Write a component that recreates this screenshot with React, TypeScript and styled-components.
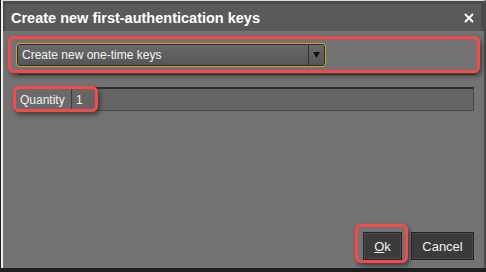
import React from 'react';
import styled, { createGlobalStyle } from 'styled-components';

const GlobalStyle = createGlobalStyle`
  html, body {
    margin: 0;
    padding: 0;
    background: #1f1f1f;
  }
  body {
    font-family: "Liberation Sans", Arial, sans-serif;
  }
`;

const Page = styled.div`
  width: 486px;
  height: 272px;
  box-sizing: border-box;
  padding: 0 0 4px 1px;
  display: flex;
  background: #1f1f1f;
`;

const Window = styled.div`
  flex: 1;
  display: flex;
  flex-direction: column;
  border-left: 2px solid #efefef;
  border-top: 1px solid #d8d8d8;
  border-right: 2px solid #4a4a4a;
  background: #737373;
`;

const Header = styled.div`
  background: #4b4b4b;
  padding: 3px 3px 0 2px;
`;

const TitleBar = styled.div`
  height: 27px;
  display: flex;
  align-items: center;
  justify-content: space-between;
  padding: 0 6px 0 6px;
  background: #5a5a5a;
  color: #fff;
  font-weight: bold;
  font-size: 14.5px;
`;

const CloseButton = styled.span`
  display: flex;
  width: 10px;
  height: 10px;
  margin-right: 1px;
`;

const Body = styled.div`
  flex: 1;
  display: flex;
  flex-direction: column;
  padding: 12px 10px 8px 12px;
`;

const Marked = styled.div`
  position: relative;
  display: flex;
`;

const Annotation = styled.div<{ $top: number; $left: number; $right: number; $bottom: number }>`
  position: absolute;
  top: ${(p) => p.$top}px;
  left: ${(p) => p.$left}px;
  right: ${(p) => p.$right}px;
  bottom: ${(p) => p.$bottom}px;
  border: 3px solid #f44a4a;
  border-radius: 6px;
  box-shadow: 2px 3px 5px rgba(0, 0, 0, 0.45);
  pointer-events: none;
`;

const SelectBox = styled.div`
  width: 310px;
  height: 24px;
  box-sizing: border-box;
  margin-left: 1px;
  display: flex;
  align-items: stretch;
  border: 1px solid #d3a22c;
  border-radius: 4px;
  box-shadow: inset 0 0 0 1px #2c2c2c;
  background: linear-gradient(#6b6b6b, #555555);
  color: #f4f4f4;
  font-size: 12px;
  overflow: hidden;
`;

const SelectText = styled.span`
  flex: 1;
  display: flex;
  align-items: center;
  padding-left: 5px;
`;

const SelectArrow = styled.span`
  width: 15px;
  display: flex;
  align-items: center;
  justify-content: center;
  border-left: 1px solid #333;
  margin: 1px 1px 1px 0;
`;

const Separator = styled.div`
  height: 1px;
  background: #3c3c3c;
  margin: 7px -2px 12px 3px;
`;

const Field = styled.div`
  position: relative;
  height: 24px;
  box-sizing: border-box;
  display: flex;
  border-top: 2px solid #2e2e2e;
  border-bottom: 1px solid #4e4e4e;
  border-right: 1px solid #4a4a4a;
`;

const FieldLabel = styled.span`
  width: 56px;
  display: flex;
  align-items: center;
  padding-left: 5px;
  box-sizing: border-box;
  background: #6a6a6a;
  color: #f0f0f0;
  font-size: 12px;
`;

const FieldInput = styled.span`
  flex: 1;
  display: flex;
  align-items: center;
  padding-left: 4px;
  background: #656565;
  border-left: 1px solid #3e3e3e;
  color: #f4f4f4;
  font-size: 12px;
`;

const Spacer = styled.div`
  flex: 1;
`;

const Footer = styled.div`
  display: flex;
  justify-content: flex-end;
  gap: 9px;
`;

const Button = styled.button<{ $width: number }>`
  width: ${(p) => p.$width}px;
  height: 28px;
  box-sizing: border-box;
  border: 1px solid #262626;
  box-shadow: inset 0 0 0 1px #4a4a4a;
  background: #3b3b3b;
  color: #f0f0f0;
  font-family: "Liberation Sans", Arial, sans-serif;
  font-size: 13px;
  padding: 0;
  display: flex;
  align-items: center;
  justify-content: center;
  u {
    text-decoration: underline;
  }
`;

const App = (): JSX.Element => {
  return (
    <Page>
      <GlobalStyle />
      <Window>
        <Header>
          <TitleBar>
            <span>Create new first-authentication keys</span>
            <CloseButton>
              <svg width="10" height="10" viewBox="0 0 10 10">
                <path d="M1 1L9 9M9 1L1 9" stroke="#fff" strokeWidth="2" />
              </svg>
            </CloseButton>
          </TitleBar>
        </Header>
        <Body>
          <Marked>
            <SelectBox>
              <SelectText>Create new one-time keys</SelectText>
              <SelectArrow>
                <svg width="7" height="6" viewBox="0 0 7 6">
                  <path d="M0 0H7L3.5 6Z" fill="#111" />
                </svg>
              </SelectArrow>
            </SelectBox>
            <Annotation $top={-7} $left={-7} $right={-6} $bottom={-6} />
          </Marked>
          <Separator />
          <Field>
            <FieldLabel>Quantity</FieldLabel>
            <FieldInput>1</FieldInput>
            <Annotation $top={-3} $left={-2} $right={375} $bottom={-2} />
          </Field>
          <Spacer />
          <Footer>
            <Marked>
              <Button $width={39}>
                <u>O</u>k
              </Button>
              <Annotation $top={-8} $left={-8} $right={-6} $bottom={-3} />
            </Marked>
            <Button $width={63}>Cancel</Button>
          </Footer>
        </Body>
      </Window>
    </Page>
  );
};

export default App;
